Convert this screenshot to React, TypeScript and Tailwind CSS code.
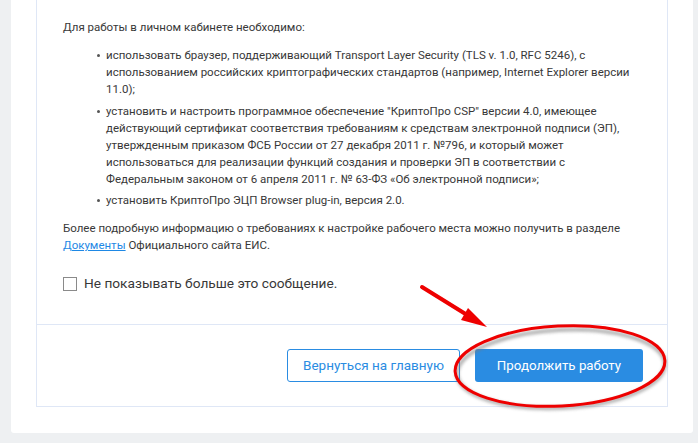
import React from "react";

const font = { fontFamily: "Roboto, 'Noto Sans', Arial, sans-serif" };

function Bullet({ children }: { children: React.ReactNode }) {
  return (
    <li className="relative pl-[43px]">
      <span className="absolute left-[34px] top-[7px] h-[3px] w-[3px] rounded-full bg-[#555]" />
      {children}
    </li>
  );
}

function Annotation() {
  return (
    <svg
      className="pointer-events-none absolute left-0 top-0"
      width="698"
      height="443"
      viewBox="0 0 698 443"
    >
      <defs>
        <filter id="sh" x="-20%" y="-40%" width="140%" height="180%">
          <feGaussianBlur stdDeviation="1.6" />
        </filter>
      </defs>
      <ellipse
        cx="561"
        cy="369"
        rx="104"
        ry="39"
        fill="none"
        stroke="#7a7a7a"
        strokeWidth="4"
        opacity="0.55"
        filter="url(#sh)"
        transform="rotate(-3 561 369)"
      />
      <ellipse
        cx="560"
        cy="366"
        rx="105"
        ry="40"
        fill="none"
        stroke="#ee0000"
        strokeWidth="3"
        transform="rotate(-3 560 366)"
      />
      <line x1="422" y1="287" x2="472" y2="318" stroke="#ee0000" strokeWidth="4" strokeLinecap="round" />
      <polygon points="487,327 461,320 468,308" fill="#ee0000" />
    </svg>
  );
}

export default function App() {
  return (
    <div className="relative h-[443px] w-[698px] overflow-hidden bg-[#eef0f2]" style={font}>
      <div className="ml-[11px] h-[433px] w-[682px] rounded-b-[3px] bg-white">
        <div className="ml-[25px] w-[632px] border-x border-b border-[#dfe7f6]">
          <div className="h-[324px] pl-[26px] pr-[30px] pt-[19px] text-[11.5px] leading-[17px] text-[#383838]">
            <p>Для работы в личном кабинете необходимо:</p>
            <ul className="mt-[11px] flex flex-col gap-[4.5px]">
              <Bullet>
                использовать браузер, поддерживающий Transport Layer Security (TLS v. 1.0, RFC 5246), с
                <br />
                использованием российских криптографических стандартов (например, Internet Explorer версии
                <br />
                11.0);
              </Bullet>
              <Bullet>
                установить и настроить программное обеспечение "КриптоПро CSP" версии 4.0, имеющее
                <br />
                действующий сертификат соответствия требованиям к средствам электронной подписи (ЭП),
                <br />
                утвержденным приказом ФСБ России от 27 декабря 2011 г. №796, и который может
                <br />
                использоваться для реализации функций создания и проверки ЭП в соответствии с
                <br />
                Федеральным законом от 6 апреля 2011 г. № 63-ФЗ «Об электронной подписи»;
              </Bullet>
              <Bullet>установить КриптоПро ЭЦП Browser plug-in, версия 2.0.</Bullet>
            </ul>
            <p className="mt-[11px]">
              Более подробную информацию о требованиях к настройке рабочего места можно получить в разделе
              <br />
              <a className="text-[#1e88e5] underline">Документы</a> Официального сайта ЕИС.
            </p>
            <label className="mt-[21px] flex items-center gap-[7px] text-[13.7px] text-[#383838]">
              <span className="h-[14px] w-[14px] border border-[#8a8a8a] bg-white" />
              Не показывать больше это сообщение.
            </label>
          </div>
          <div className="flex h-[82px] items-center justify-end gap-[15px] border-t border-[#dfe7f6] pr-[24px]">
            <button className="h-[33px] w-[173px] rounded-[3px] border border-[#2a8ce2] bg-white text-[13.5px] text-[#2a8ce2]">
              Вернуться на главную
            </button>
            <button className="h-[33px] w-[168px] rounded-[3px] bg-[#2a8ce2] text-[13.3px] text-white">
              Продолжить работу
            </button>
          </div>
        </div>
      </div>
      <Annotation />
    </div>
  );
}
